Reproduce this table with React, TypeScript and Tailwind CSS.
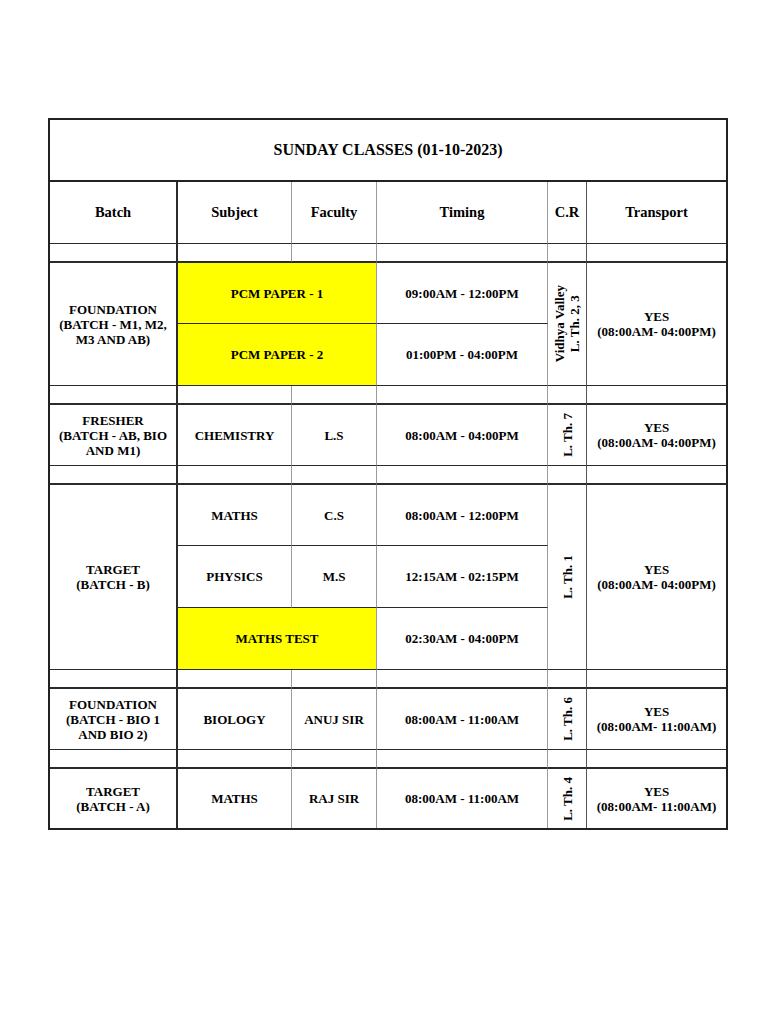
import React from 'react';

const cell = 'border-r border-b border-[#2b2b2b] text-center align-middle px-1 leading-[15px]';
const grayR = 'border-r-[#9a9a9a]';
const yellow = 'bg-[#ffff00]';
const head = 'text-[14.5px]';

function Vertical({ lines }: { lines: string[] }) {
  return (
    <div className="flex items-center justify-center">
      <div className="[writing-mode:vertical-rl] rotate-180 whitespace-nowrap leading-[15px] text-center">
        {lines.map((l) => (
          <div key={l}>{l}</div>
        ))}
      </div>
    </div>
  );
}

function Spacer() {
  return (
    <tr className="h-[18px]">
      <td className={`${cell} border-r-2`}></td>
      <td className={`${cell} ${grayR}`}></td>
      <td className={`${cell} ${grayR}`}></td>
      <td className={`${cell} ${grayR}`}></td>
      <td className={`${cell} border-r-[#555]`}></td>
      <td className={`${cell} border-r-0`}></td>
    </tr>
  );
}

export default function App() {
  return (
    <div className="w-[768px] h-[1024px] bg-white pt-[118px] pl-[48px] [font-family:Liberation_Serif,Times_New_Roman,serif] font-bold text-[13px] text-black">
      <table className="w-[680px] table-fixed border-separate border-spacing-0 border-2 border-[#222]">
        <colgroup>
          <col className="w-[128px]" />
          <col className="w-[114px]" />
          <col className="w-[85px]" />
          <col className="w-[171px]" />
          <col className="w-[39px]" />
          <col className="w-[139px]" />
        </colgroup>
        <tbody>
          <tr className="h-[62px]">
            <td colSpan={6} className="border-b-2 border-[#222] text-center align-middle text-[16px]">
              SUNDAY CLASSES (01-10-2023)
            </td>
          </tr>
          <tr className="h-[62px]">
            <td className={`${cell} ${head} border-r-2`}>Batch</td>
            <td className={`${cell} ${head} ${grayR}`}>Subject</td>
            <td className={`${cell} ${head} ${grayR}`}>Faculty</td>
            <td className={`${cell} ${head} ${grayR}`}>Timing</td>
            <td className={`${cell} ${head} border-r-[#555]`}>C.R</td>
            <td className={`${cell} ${head} border-r-0`}>Transport</td>
          </tr>
          <Spacer />

          <tr className="h-[62px]">
            <td rowSpan={2} className={`${cell} border-r-2 border-t`}>
              FOUNDATION<br />(BATCH - M1, M2,<br />M3 AND AB)
            </td>
            <td colSpan={2} className={`${cell} ${grayR} ${yellow} border-t`}>PCM PAPER - 1</td>
            <td className={`${cell} ${grayR} border-t`}>09:00AM - 12:00PM</td>
            <td rowSpan={2} className={`${cell} border-r-[#555] border-t`}>
              <Vertical lines={['Vidhya Valley', 'L. Th. 2, 3']} />
            </td>
            <td rowSpan={2} className={`${cell} border-r-0 border-t`}>
              YES<br />(08:00AM- 04:00PM)
            </td>
          </tr>
          <tr className="h-[62px]">
            <td colSpan={2} className={`${cell} ${grayR} ${yellow}`}>PCM PAPER - 2</td>
            <td className={`${cell} ${grayR}`}>01:00PM - 04:00PM</td>
          </tr>
          <Spacer />

          <tr className="h-[62px]">
            <td className={`${cell} border-r-2 border-t`}>
              FRESHER<br />(BATCH - AB, BIO<br />AND M1)
            </td>
            <td className={`${cell} ${grayR} border-t`}>CHEMISTRY</td>
            <td className={`${cell} ${grayR} border-t`}>L.S</td>
            <td className={`${cell} ${grayR} border-t`}>08:00AM - 04:00PM</td>
            <td className={`${cell} border-r-[#555] border-t`}>
              <Vertical lines={['L. Th. 7']} />
            </td>
            <td className={`${cell} border-r-0 border-t`}>
              YES<br />(08:00AM- 04:00PM)
            </td>
          </tr>
          <Spacer />

          <tr className="h-[62px]">
            <td rowSpan={3} className={`${cell} border-r-2 border-t`}>
              TARGET<br />(BATCH - B)
            </td>
            <td className={`${cell} ${grayR} border-t`}>MATHS</td>
            <td className={`${cell} ${grayR} border-t`}>C.S</td>
            <td className={`${cell} ${grayR} border-t`}>08:00AM - 12:00PM</td>
            <td rowSpan={3} className={`${cell} border-r-[#555] border-t`}>
              <Vertical lines={['L. Th. 1']} />
            </td>
            <td rowSpan={3} className={`${cell} border-r-0 border-t`}>
              YES<br />(08:00AM- 04:00PM)
            </td>
          </tr>
          <tr className="h-[62px]">
            <td className={`${cell} ${grayR}`}>PHYSICS</td>
            <td className={`${cell} ${grayR}`}>M.S</td>
            <td className={`${cell} ${grayR}`}>12:15AM - 02:15PM</td>
          </tr>
          <tr className="h-[62px]">
            <td colSpan={2} className={`${cell} ${grayR} ${yellow}`}>MATHS TEST</td>
            <td className={`${cell} ${grayR}`}>02:30AM - 04:00PM</td>
          </tr>
          <Spacer />

          <tr className="h-[62px]">
            <td className={`${cell} border-r-2 border-t`}>
              FOUNDATION<br />(BATCH - BIO 1<br />AND BIO 2)
            </td>
            <td className={`${cell} ${grayR} border-t`}>BIOLOGY</td>
            <td className={`${cell} ${grayR} border-t`}>ANUJ SIR</td>
            <td className={`${cell} ${grayR} border-t`}>08:00AM - 11:00AM</td>
            <td className={`${cell} border-r-[#555] border-t`}>
              <Vertical lines={['L. Th. 6']} />
            </td>
            <td className={`${cell} border-r-0 border-t`}>
              YES<br />(08:00AM- 11:00AM)
            </td>
          </tr>
          <Spacer />

          <tr className="h-[60px]">
            <td className={`${cell} border-r-2 border-t border-b-0`}>
              TARGET<br />(BATCH - A)
            </td>
            <td className={`${cell} ${grayR} border-t border-b-0`}>MATHS</td>
            <td className={`${cell} ${grayR} border-t border-b-0`}>RAJ SIR</td>
            <td className={`${cell} ${grayR} border-t border-b-0`}>08:00AM - 11:00AM</td>
            <td className={`${cell} border-r-[#555] border-t border-b-0`}>
              <Vertical lines={['L. Th. 4']} />
            </td>
            <td className={`${cell} border-r-0 border-t border-b-0`}>
              YES<br />(08:00AM- 11:00AM)
            </td>
          </tr>
        </tbody>
      </table>
    </div>
  );
}
